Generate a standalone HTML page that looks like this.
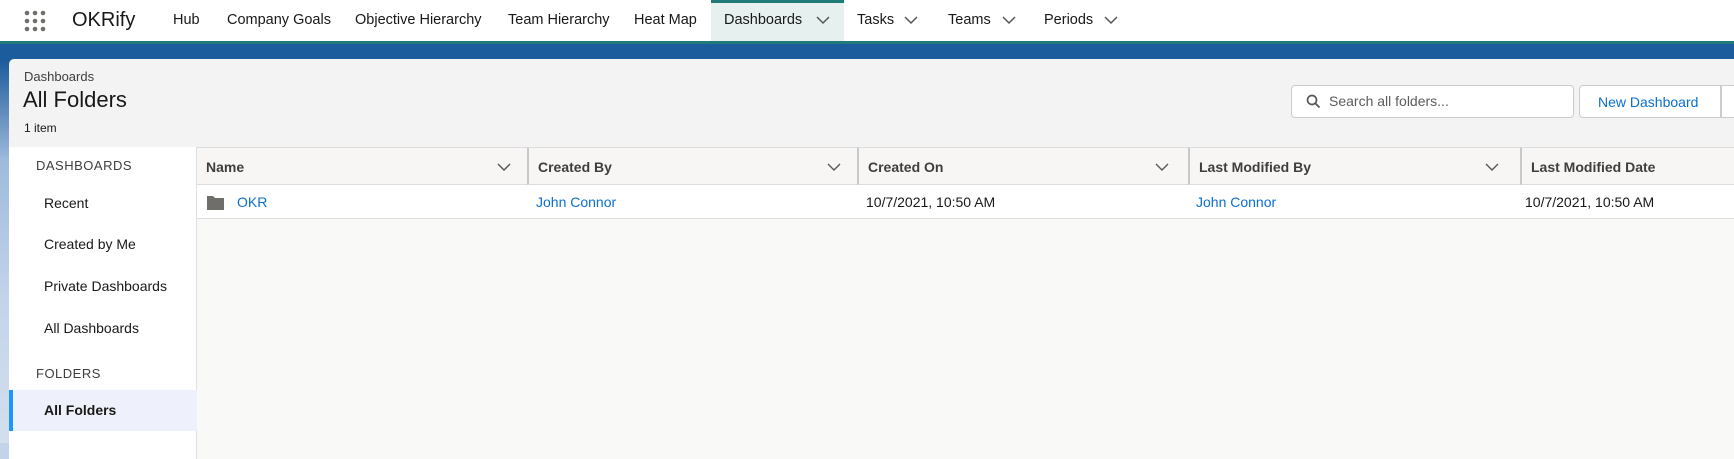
<!DOCTYPE html>
<html style="height:443px"><head><meta charset="utf-8"><style>
*{box-sizing:border-box;margin:0;padding:0}
body{width:1734px;height:443px;overflow:hidden;font-family:"Liberation Sans",sans-serif;color:#181818;position:relative;background:#c3d4ea}
.bg{position:absolute;left:0;top:0;width:1734px;height:443px;background:linear-gradient(#1b5b9c 0,#1b5b9c 60px,#9fbadc 160px,#c3d4ea 300px,#d3dfee 443px)}
.nav{position:absolute;left:0;top:0;width:1734px;height:44px;background:#fff;border-bottom:3px solid #1f7a78}
.nav span{position:absolute;top:12px;font-size:14.5px;color:#181818}
.chev{position:absolute;top:15px;width:14px;height:10px}
.tab{position:absolute;left:711px;top:0;width:133px;height:41px;background:#e6f0ef;border-top:3px solid #1f7a78}
.banner{position:absolute;left:0;top:44px;width:1734px;height:16px;background:#1c5c9c}
.card{position:absolute;left:9px;top:59px;width:1740px;height:400px;background:#f3f3f3;border-radius:5px 0 0 0;overflow:hidden}
.abs{position:absolute}
.side{position:absolute;left:0;top:88px;width:188px;height:320px;background:#fff;border-right:1px solid #dde0e5}
.side div{position:absolute;font-size:14px;left:35px}
.side .lbl{left:27px;font-size:13px;color:#3e3e3c;letter-spacing:.5px}
.th{position:absolute;top:88px;height:38px;background:#f7f6f5;border-bottom:1px solid #ddd;border-top:1px solid #ddd;border-left:2px solid #c9c9c9;font-weight:bold;font-size:14px;color:#3e3e3c}
.th b{position:absolute;left:9px;top:11px}
.td{position:absolute;top:126px;height:34px;background:#fff;border-bottom:1px solid #ddd;font-size:14px}
a{color:#0b6fce;text-decoration:none}
</style></head><body>
<div class="bg"></div>
<div class="nav">
<svg class="abs" style="left:24px;top:10px" width="22" height="22" viewBox="0 0 22 22" fill="#706e6b"><circle cx="3" cy="3" r="2.3"/><circle cx="11" cy="3" r="2.3"/><circle cx="19" cy="3" r="2.3"/><circle cx="3" cy="11" r="2.3"/><circle cx="11" cy="11" r="2.3"/><circle cx="19" cy="11" r="2.3"/><circle cx="3" cy="19" r="2.3"/><circle cx="11" cy="19" r="2.3"/><circle cx="19" cy="19" r="2.3"/></svg>
<span style="left:72px;top:9px;font-size:20px">OKRify</span>
<span style="left:173px">Hub</span>
<span style="left:227px">Company Goals</span>
<span style="left:355px">Objective Hierarchy</span>
<span style="left:508px">Team Hierarchy</span>
<span style="left:634px">Heat Map</span>
<div class="tab"></div>
<span style="left:724px">Dashboards</span>
<svg class="chev" style="left:816px" viewBox="0 0 14 10"><path d="M1 2l6 6 6-6" stroke="#555" stroke-width="1.5" fill="none"/></svg>
<span style="left:857px">Tasks</span>
<svg class="chev" style="left:904px" viewBox="0 0 14 10"><path d="M1 2l6 6 6-6" stroke="#555" stroke-width="1.5" fill="none"/></svg>
<span style="left:948px">Teams</span>
<svg class="chev" style="left:1002px" viewBox="0 0 14 10"><path d="M1 2l6 6 6-6" stroke="#555" stroke-width="1.5" fill="none"/></svg>
<span style="left:1044px">Periods</span>
<svg class="chev" style="left:1104px" viewBox="0 0 14 10"><path d="M1 2l6 6 6-6" stroke="#555" stroke-width="1.5" fill="none"/></svg>
</div>
<div class="banner"></div>
<div class="card">
<div class="abs" style="left:15px;top:10px;font-size:13px;color:#3e3e3c">Dashboards</div>
<div class="abs" style="left:14px;top:28px;font-size:22px">All Folders</div>
<div class="abs" style="left:15px;top:62px;font-size:12px">1 item</div>
<div class="abs" style="left:1282px;top:26px;width:283px;height:33px;background:#fff;border:1px solid #ccc;border-radius:4px"></div>
<svg class="abs" style="left:1297px;top:35px" width="15" height="15" viewBox="0 0 15 15"><circle cx="6" cy="6" r="4.5" stroke="#555" stroke-width="1.7" fill="none"/><path d="M9.5 9.5l4 4" stroke="#555" stroke-width="1.8"/></svg>
<div class="abs" style="left:1320px;top:34px;font-size:14px;color:#5c5c5c">Search all folders...</div>
<div class="abs" style="left:1570px;top:26px;width:142px;height:33px;background:#fff;border:1px solid #ccc;border-radius:4px 0 0 4px;color:#0b6fce;font-size:14px;padding:8px 0 0 18px">New Dashboard</div>
<div class="abs" style="left:1712px;top:26px;width:40px;height:33px;background:#fff;border:1px solid #ccc"></div>
<div class="abs" style="left:188px;top:88px;width:1560px;height:320px;background:#f9f9f8"></div>
<div class="side">
<div class="lbl" style="top:11px">DASHBOARDS</div>
<div style="top:48px">Recent</div>
<div style="top:89px">Created by Me</div>
<div style="top:131px">Private Dashboards</div>
<div style="top:173px">All Dashboards</div>
<div class="lbl" style="top:219px">FOLDERS</div>
<div style="left:0;top:243px;width:188px;height:41px;background:#eef1fb;border-left:4px solid #1b96ff"></div>
<div style="top:255px;font-weight:bold">All Folders</div>
</div>
<div class="th" style="left:188px;width:330px;border-left:none"><b>Name</b></div>
<div class="th" style="left:518px;width:330px"><b>Created By</b></div>
<div class="th" style="left:848px;width:331px"><b>Created On</b></div>
<div class="th" style="left:1179px;width:332px"><b>Last Modified By</b></div>
<div class="th" style="left:1511px;width:240px"><b>Last Modified Date</b></div>
<svg class="chev" style="left:488px;top:103px" viewBox="0 0 14 10"><path d="M1 2l6 6 6-6" stroke="#555" stroke-width="1.4" fill="none"/></svg>
<svg class="chev" style="left:818px;top:103px" viewBox="0 0 14 10"><path d="M1 2l6 6 6-6" stroke="#555" stroke-width="1.4" fill="none"/></svg>
<svg class="chev" style="left:1146px;top:103px" viewBox="0 0 14 10"><path d="M1 2l6 6 6-6" stroke="#555" stroke-width="1.4" fill="none"/></svg>
<svg class="chev" style="left:1476px;top:103px" viewBox="0 0 14 10"><path d="M1 2l6 6 6-6" stroke="#555" stroke-width="1.4" fill="none"/></svg>
<div class="td" style="left:188px;width:1560px"></div>
<svg class="abs" style="left:198px;top:136px" width="17" height="15" viewBox="0 0 17 15"><path d="M0 1h6l2 2h9v12H0z" fill="#706e6b"/></svg>
<div class="abs" style="left:228px;top:135px;font-size:14px"><a>OKR</a></div>
<div class="abs" style="left:527px;top:135px;font-size:14px"><a>John Connor</a></div>
<div class="abs" style="left:857px;top:135px;font-size:14px">10/7/2021, 10:50 AM</div>
<div class="abs" style="left:1187px;top:135px;font-size:14px"><a>John Connor</a></div>
<div class="abs" style="left:1516px;top:135px;font-size:14px">10/7/2021, 10:50 AM</div>
</div>
</body></html>
